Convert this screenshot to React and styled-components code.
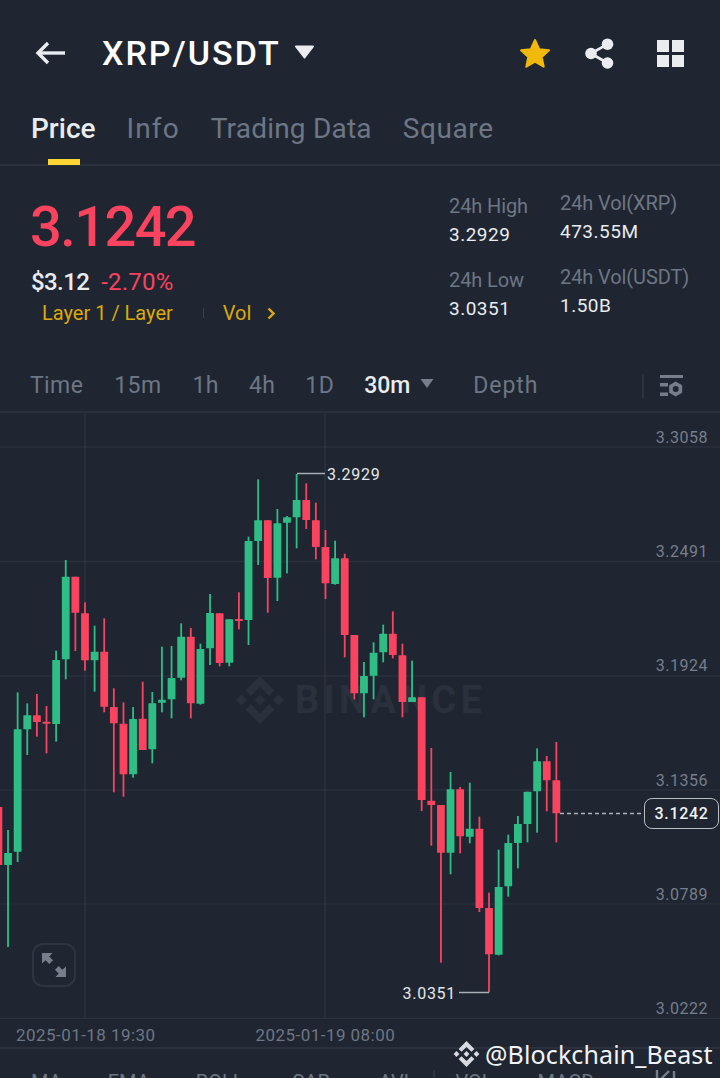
import React from "react";
import styled, { createGlobalStyle } from "styled-components";

const GlobalStyle = createGlobalStyle`
  html, body { margin: 0; padding: 0; background: #1f2631; }
  * { box-sizing: border-box; }
`;

const FONT = `Roboto, "Liberation Sans", sans-serif`;

const Page = styled.div`
  position: relative;
  width: 720px;
  height: 1078px;
  overflow: hidden;
  background: #1f2631;
  font-family: ${FONT};
  color: #eaecef;
`;

const Header = styled.header`
  display: flex;
  align-items: center;
  height: 106px;
  padding: 0 36px 0 35px;
`;

const Title = styled.h1`
  margin: 0 0 0 37px;
  font-size: 34px;
  line-height: 40px;
  font-weight: 500;
  letter-spacing: 2px;
  color: #fff;
`;

const TitleCaret = styled.svg`
  margin: -2px 0 0 14px;
`;

const HeaderActions = styled.div`
  display: flex;
  align-items: center;
  margin-left: auto;
`;

const ActionIcon = styled.svg`
  display: block;
  margin-left: ${(p) => p.$gap || 0}px;
`;

const Tabs = styled.nav`
  display: flex;
  gap: 31px;
  height: 60px;
  padding-left: 31px;
  border-bottom: 2px solid #2a313c;
`;

const Tab = styled.div`
  position: relative;
  font-size: 28px;
  line-height: 46px;
  font-weight: ${(p) => (p.$active ? 500 : 400)};
  color: ${(p) => (p.$active ? "#eaecef" : "#6d7685")};
  letter-spacing: ${(p) => p.$spacing || 0}px;

  ${(p) =>
    p.$active &&
    `&::after {
      content: "";
      position: absolute;
      left: 17px;
      bottom: -1px;
      width: 32px;
      height: 6px;
      background: #fcd535;
    }`}
`;

const Summary = styled.section`
  display: flex;
  height: 194px;
`;

const PriceColumn = styled.div`
  width: 449px;
  padding: 33px 0 0 30px;
`;

const LastPrice = styled.div`
  font-size: 56px;
  line-height: 56px;
  font-weight: 500;
  letter-spacing: -1.6px;
  color: #f9435f;
`;

const SubPrice = styled.div`
  display: flex;
  gap: 12px;
  margin-top: 12px;
  margin-left: 1px;
  font-size: 24px;
  line-height: 30px;
`;

const Fiat = styled.span`
  color: #eaecef;
  font-weight: 500;
  letter-spacing: -0.6px;
`;

const Change = styled.span`
  color: #f9435f;
  letter-spacing: 0.2px;
`;

const TagRow = styled.div`
  display: flex;
  align-items: center;
  margin: 4px 0 0 12px;
  font-size: 20px;
  line-height: 24px;
  color: #dba90c;
`;

const TagDivider = styled.span`
  width: 1px;
  height: 10px;
  margin: 0 19px 0 30px;
  background: #3a424f;
`;

const TagChevron = styled.svg`
  margin-left: 16px;
`;

const StatColumn = styled.div`
  display: flex;
  flex-direction: column;
  gap: 17px;
  width: ${(p) => p.$width}px;
  padding-top: ${(p) => p.$top}px;
`;

const Stat = styled.div`
  height: 57px;
`;

const StatLabel = styled.div`
  font-size: 20px;
  line-height: 28px;
  letter-spacing: -0.1px;
  color: #6d7685;
  white-space: nowrap;
`;

const StatValue = styled.div`
  margin-top: 1px;
  font-size: 19px;
  line-height: 28px;
  letter-spacing: 0.5px;
  color: #eaecef;
`;

const TimeRow = styled.div`
  display: flex;
  align-items: center;
  height: 53px;
  padding: 0 37px 0 30px;
  border-bottom: 2px solid #2a313c;
`;

const TimeItem = styled.span`
  margin-right: ${(p) => p.$gap}px;
  font-size: 23px;
  line-height: 30px;
  font-weight: ${(p) => (p.$active ? 500 : 400)};
  letter-spacing: ${(p) => p.$spacing ?? 0.4}px;
  color: ${(p) => (p.$active ? "#eaecef" : "#6d7685")};
`;

const TimeCaret = styled.svg`
  margin: -4px 39px 0 -24px;
`;

const RowDivider = styled.span`
  width: 2px;
  height: 24px;
  margin-left: auto;
  margin-right: 16px;
  background: #2e3541;
`;

const ChartPanel = styled.div`
  position: relative;
  height: 606px;
`;

const ChartSvg = styled.svg`
  display: block;
  width: 720px;
  height: 606px;
`;

const AxisText = styled.text`
  font-family: ${FONT};
  font-size: 16px;
  letter-spacing: 0.5px;
  fill: #767e8c;
  text-anchor: end;
`;

const MarkText = styled.text`
  font-family: ${FONT};
  font-size: 16px;
  letter-spacing: 0.7px;
  fill: #e4e6ea;
  text-anchor: ${(p) => p.$anchor};
`;

const WatermarkText = styled.text`
  font-family: ${FONT};
  font-size: 38px;
  font-weight: 700;
  letter-spacing: 4.3px;
  fill: #2a303c;
`;

const PriceTag = styled.div`
  position: absolute;
  left: 644px;
  top: 385px;
  width: 75px;
  height: 31px;
  padding-top: 3px;
  border: 1.5px solid #b9bdc4;
  border-radius: 8px;
  background: #1f2631;
  color: #f1f2f4;
  font-size: 16px;
  font-weight: 500;
  letter-spacing: 0.7px;
  line-height: 24px;
  text-align: center;
`;

const ExpandButton = styled.div`
  position: absolute;
  left: 32px;
  top: 530px;
  width: 44px;
  height: 44px;
  display: flex;
  align-items: center;
  justify-content: center;
  border: 2px solid #2e3541;
  border-radius: 11px;
`;

const DateRow = styled.div`
  display: flex;
  gap: 100px;
  height: 30px;
  padding: 2px 0 0 16px;
  border-bottom: 2px solid #2a313c;
  font-size: 17px;
  line-height: 28px;
  letter-spacing: 0.45px;
  color: #6d7685;
`;

const IndicatorRow = styled.div`
  display: flex;
  align-items: center;
  height: 66px;
  padding: 0 0 0 31px;
`;

const Indicator = styled.span`
  margin-right: ${(p) => p.$gap}px;
  font-size: 20px;
  line-height: 26px;
  color: #6d7685;
`;

const IndicatorDivider = styled.span`
  width: 2px;
  height: 24px;
  margin-right: 20px;
  background: #2e3541;
`;

const IndicatorIcon = styled.svg`
  margin: 0 0 0 60px;
`;

const Credit = styled.div`
  position: absolute;
  left: 453px;
  top: 1039px;
  display: flex;
  align-items: center;
  gap: 5px;
  font-family: "Noto Sans", sans-serif;
  font-size: 25px;
  line-height: 30px;
  letter-spacing: 0.12px;
  color: #f2f3f5;
  white-space: nowrap;
`;

const UP = "#2ebd85";
const DOWN = "#f9435f";

/* [colour, wick top, body top, body bottom, wick bottom], read off the 3x crops */
const crop = (base, rows) =>
  rows.map(([c, a, b, d, e]) => [c, base + a / 3, base + b / 3, base + d / 3, base + e / 3]);

const candles = [
  [DOWN, 807, 807, 865, 865],
  [UP, 830, 853, 865, 947],
  ...crop(460, [
    [UP, 697, 808, 1175, 1206],
    [UP, 730, 766, 808, 885],
    [DOWN, 702, 766, 786, 830],
    [DOWN, 738, 785, 791, 880],
    [UP, 572, 600, 792, 845],
    [UP, 300, 350, 598, 658],
    [DOWN, 350, 350, 458, 573],
    [DOWN, 427, 460, 601, 632],
    [UP, 497, 575, 601, 695],
    [DOWN, 475, 575, 740, 757],
    [DOWN, 685, 741, 790, 997],
    [DOWN, 727, 791, 943, 1010],
    [UP, 741, 777, 943, 953],
    [DOWN, 665, 776, 870, 870],
    [UP, 696, 730, 868, 910],
    [UP, 560, 719, 728, 757],
    [UP, 558, 654, 718, 775],
    [UP, 490, 530, 653, 661],
    [DOWN, 504, 530, 730, 775],
    [UP, 551, 567, 731, 734],
    [UP, 402, 459, 565, 615],
    [DOWN, 460, 460, 609, 619],
    [UP, 477, 478, 608, 619],
    [DOWN, 397, 477, 483, 508],
    [UP, 230, 243, 480, 555],
    [UP, 58, 181, 243, 315],
    [DOWN, 181, 181, 354, 458],
    [UP, 147, 190, 353, 423],
    [UP, 168, 172, 188, 340],
    [UP, 42, 120, 172, 265],
    [DOWN, 70, 120, 180, 207],
    [DOWN, 128, 181, 261, 298],
    [DOWN, 210, 261, 370, 417],
    [UP, 242, 295, 372, 374],
    [DOWN, 281, 295, 525, 592],
    [DOWN, 525, 525, 700, 718],
    [UP, 606, 648, 700, 772],
    [UP, 547, 578, 647, 718],
    [UP, 494, 521, 577, 607],
    [DOWN, 454, 521, 585, 595],
    [DOWN, 551, 586, 726, 772],
    [UP, 602, 712, 726, 726],
  ]),
  ...crop(680, [
    [DOWN, 52, 52, 360, 393],
    [DOWN, 204, 362, 375, 497],
    [DOWN, 375, 375, 518, 848],
    [UP, 276, 328, 518, 583],
    [DOWN, 321, 328, 469, 520],
    [UP, 308, 446, 470, 490],
    [DOWN, 410, 446, 684, 696],
    [DOWN, 638, 684, 823, 937],
    [UP, 509, 621, 824, 826],
    [UP, 464, 489, 619, 650],
    [UP, 408, 432, 489, 565],
    [UP, 335, 335, 432, 487],
    [UP, 205, 244, 334, 458],
    [DOWN, 228, 244, 301, 394],
    [DOWN, 186, 301, 400, 487],
  ]),
];

const axis = [
  ["3.3058", 443],
  ["3.2491", 557],
  ["3.1924", 671],
  ["3.1356", 786],
  ["3.0789", 900],
  ["3.0222", 1014],
];

const grid = [447, 561.5, 676, 790, 904];

function BinanceMark({ x, y, size, fill }) {
  return (
    <svg x={x} y={y} width={size} height={size} viewBox="0 0 24 24" fill={fill}>
      <path d="M7.6 10.1 12 5.7l4.4 4.4 2.6-2.6L12 .5 5 7.5z" />
      <path d="M16.4 13.9 12 18.3l-4.4-4.4-2.6 2.6 7 7 7-7z" />
      <path d="M.5 12l2.6-2.6L5.7 12l-2.6 2.6z" />
      <path d="M18.3 12l2.6-2.6 2.6 2.6-2.6 2.6z" />
      <path d="M14.6 12 12 9.4 9.4 12l2.6 2.6z" />
    </svg>
  );
}

function Chart() {
  return (
    <ChartPanel>
      <ChartSvg viewBox="0 413 720 606">
        <g stroke="#2a313c" strokeWidth="1.5">
          {grid.map((y) => (
            <line key={y} x1="0" x2="720" y1={y} y2={y} />
          ))}
          <line x1="0" x2="720" y1="1018.5" y2="1018.5" />
          <line x1="85" x2="85" y1="413" y2="1019" stroke="#323946" strokeWidth="1" />
          <line x1="325" x2="325" y1="413" y2="1019" stroke="#323946" strokeWidth="1" />
        </g>

        <BinanceMark x={235} y={675} size={50} fill="#2a303c" />
        <WatermarkText x="295" y="713">BINANCE</WatermarkText>

        {candles.map(([color, top, bodyTop, bodyBottom, bottom], i) => {
          const x = -1.6 + 9.62 * i;
          return (
            <g key={i} fill={color}>
              <rect x={x - 0.9} y={top} width="1.8" height={bottom - top} />
              <rect
                x={x - 3.9}
                y={bodyTop}
                width="7.8"
                height={Math.max(bodyBottom - bodyTop, 2)}
                rx="0.5"
              />
            </g>
          );
        })}

        {axis.map(([label, y]) => (
          <AxisText key={label} x="708" y={y}>{label}</AxisText>
        ))}

        <path d="M297 473.5h28" stroke="#a9adb5" strokeWidth="1.5" fill="none" />
        <MarkText x="327" y="480" $anchor="start">3.2929</MarkText>

        <path d="M489 992.5h-30" stroke="#a9adb5" strokeWidth="1.5" fill="none" />
        <MarkText x="456" y="999" $anchor="end">3.0351</MarkText>

        <line
          x1="560"
          x2="644"
          y1="813.5"
          y2="813.5"
          stroke="#aeb2b9"
          strokeWidth="1.5"
          strokeDasharray="4 3"
        />
      </ChartSvg>

      <PriceTag>3.1242</PriceTag>

      <ExpandButton>
        <svg width="28" height="28" viewBox="0 0 28 28" fill="#767e8c">
          <path d="M2 2h10.5L9.3 5.6 13 9.3 9.3 13 5.6 9.3 2 12.5z" />
          <path d="M26 26H15.5l3.2-3.6-3.7-3.7 3.7-3.7 3.7 3.7 3.6-3.2z" />
        </svg>
      </ExpandButton>
    </ChartPanel>
  );
}

export default function App() {
  return (
    <Page>
      <GlobalStyle />
      <Header>
        <svg width="30" height="24" viewBox="0 0 30 24" fill="none" stroke="#eaecef" strokeWidth="3.4">
          <path d="M30 12H3" />
          <path d="M13 2 3 12l10 10" />
        </svg>
        <Title>XRP/USDT</Title>
        <TitleCaret width="19" height="14" viewBox="0 0 19 14" fill="#eaecef">
          <path d="M1 0.5h17a1 1 0 0 1 .8 1.6L10.3 13a1 1 0 0 1-1.6 0L.2 2.1A1 1 0 0 1 1 .5z" />
        </TitleCaret>
        <HeaderActions>
          <ActionIcon width="32" height="31" viewBox="0 0 32 31" fill="#f0b90b" stroke="#f0b90b" strokeWidth="2" strokeLinejoin="round">
            <path d="M16 2l4.2 9.2 9.8 1.1-7.3 6.6 2 9.8L16 23.7l-8.7 5 2-9.8L2 12.3l9.8-1.1z" />
          </ActionIcon>
          <ActionIcon $gap={34} width="29" height="31" viewBox="0 0 29 31" fill="#eaecef">
            <circle cx="22.5" cy="6.2" r="5.8" />
            <circle cx="22.5" cy="25" r="5.8" />
            <circle cx="6" cy="15.5" r="5.8" />
            <path d="M6 15.5 22.5 6.2M6 15.5 22.5 25" stroke="#eaecef" strokeWidth="2.6" />
          </ActionIcon>
          <ActionIcon $gap={43} width="27" height="27" viewBox="0 0 27 27" fill="#eaecef">
            <rect x="0" y="0" width="12" height="12" />
            <rect x="15" y="0" width="12" height="12" />
            <rect x="0" y="15" width="12" height="12" />
            <rect x="15" y="15" width="12" height="12" />
          </ActionIcon>
        </HeaderActions>
      </Header>

      <Tabs>
        <Tab $active>Price</Tab>
        <Tab $spacing={1.1}>Info</Tab>
        <Tab $spacing={0.2}>Trading Data</Tab>
        <Tab $spacing={0.6}>Square</Tab>
      </Tabs>

      <Summary>
        <PriceColumn>
          <LastPrice>3.1242</LastPrice>
          <SubPrice>
            <Fiat>$3.12</Fiat>
            <Change>-2.70%</Change>
          </SubPrice>
          <TagRow>
            Layer 1 / Layer
            <TagDivider />
            Vol
            <TagChevron width="8" height="13" viewBox="0 0 8 13" fill="none" stroke="#dba90c" strokeWidth="2.4">
              <path d="M1.5 1.5l5 5-5 5" />
            </TagChevron>
          </TagRow>
        </PriceColumn>
        <StatColumn $width={111} $top={26}>
          <Stat>
            <StatLabel>24h High</StatLabel>
            <StatValue>3.2929</StatValue>
          </Stat>
          <Stat>
            <StatLabel>24h Low</StatLabel>
            <StatValue>3.0351</StatValue>
          </Stat>
        </StatColumn>
        <StatColumn $width={150} $top={23}>
          <Stat>
            <StatLabel>24h Vol(XRP)</StatLabel>
            <StatValue>473.55M</StatValue>
          </Stat>
          <Stat>
            <StatLabel>24h Vol(USDT)</StatLabel>
            <StatValue>1.50B</StatValue>
          </Stat>
        </StatColumn>
      </Summary>

      <TimeRow>
        <TimeItem $gap={31}>Time</TimeItem>
        <TimeItem $gap={31}>15m</TimeItem>
        <TimeItem $gap={30}>1h</TimeItem>
        <TimeItem $gap={30}>4h</TimeItem>
        <TimeItem $gap={30}>1D</TimeItem>
        <TimeItem $gap={34} $active $spacing={0}>30m</TimeItem>
        <TimeCaret width="14" height="9" viewBox="0 0 14 9" fill="#767e8c">
          <path d="M0.5 0h13L7 9z" />
        </TimeCaret>
        <TimeItem $gap={0} $spacing={0.9}>Depth</TimeItem>
        <RowDivider />
        <svg width="23" height="22" viewBox="0 0 23 22" fill="#767e8c">
          <rect x="0" y="0" width="23" height="3" />
          <rect x="0" y="8" width="8" height="3.5" />
          <rect x="0" y="17.5" width="8" height="3.5" />
          <path fillRule="evenodd" d="M15.7 6.5l6.5 3.75v7.5L15.7 21.5l-6.5-3.75v-7.5zM15.7 11a3 3 0 1 0 0 6 3 3 0 0 0 0-6z" />
        </svg>
      </TimeRow>

      <Chart />

      <DateRow>
        <span>2025-01-18 19:30</span>
        <span>2025-01-19 08:00</span>
      </DateRow>

      <IndicatorRow>
        <Indicator $gap={46}>MA</Indicator>
        <Indicator $gap={46}>EMA</Indicator>
        <Indicator $gap={49}>BOLL</Indicator>
        <Indicator $gap={49}>SAR</Indicator>
        <Indicator $gap={19}>AVL</Indicator>
        <IndicatorDivider />
        <Indicator $gap={45}>VOL</Indicator>
        <Indicator $gap={0}>MACD</Indicator>
        <IndicatorIcon width="22" height="26" viewBox="0 0 22 26" fill="none" stroke="#767e8c" strokeWidth="2.4">
          <path d="M3 1v24M3 14 15 2M3 14l12 10M20 2v22" />
        </IndicatorIcon>
      </IndicatorRow>

      <Credit>
        <svg width="27" height="28" viewBox="0 0 24 24" fill="#d9dbe0">
          <path d="M7.6 10.1 12 5.7l4.4 4.4 2.6-2.6L12 .5 5 7.5z" />
          <path d="M16.4 13.9 12 18.3l-4.4-4.4-2.6 2.6 7 7 7-7z" />
          <path d="M.5 12l2.6-2.6L5.7 12l-2.6 2.6z" />
          <path d="M18.3 12l2.6-2.6 2.6 2.6-2.6 2.6z" />
          <path d="M14.6 12 12 9.4 9.4 12l2.6 2.6z" />
        </svg>
        @Blockchain_Beast
      </Credit>
    </Page>
  );
}
